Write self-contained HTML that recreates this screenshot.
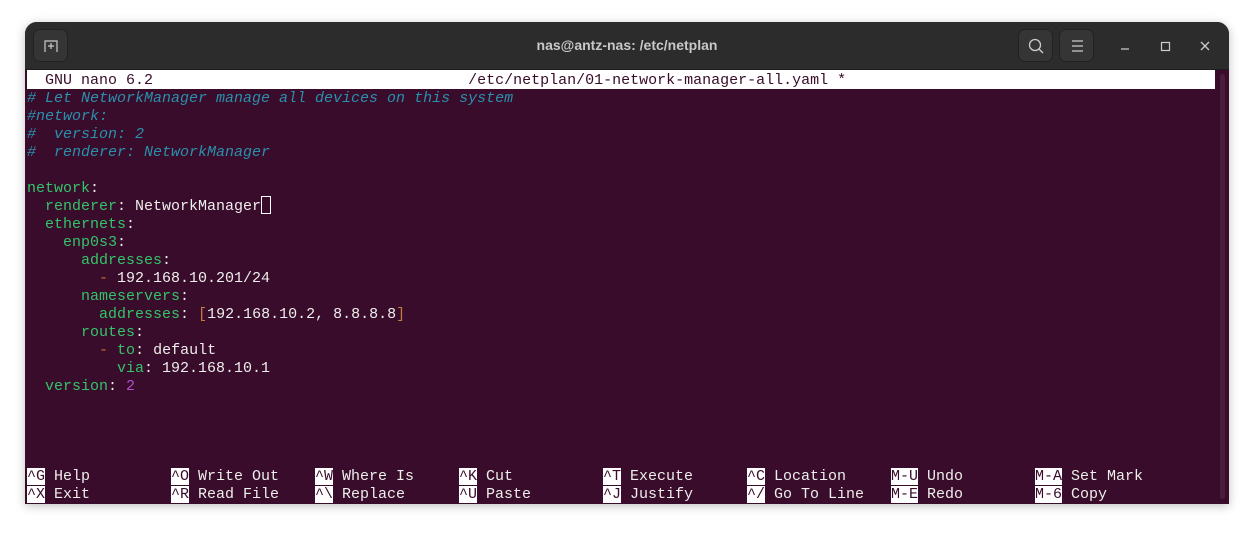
<!DOCTYPE html>
<html><head><style>
*{margin:0;padding:0;box-sizing:border-box}
body{width:1254px;height:533px;background:#fff;position:relative;overflow:hidden;font-family:"Liberation Mono",monospace}
.win{position:absolute;left:25px;top:22px;width:1204px;height:482px;background:#380c2a;border-radius:12px 12px 0 0;overflow:hidden;box-shadow:0 2px 10px rgba(0,0,0,.25)}
.tb{position:absolute;left:0;top:0;width:100%;height:48px;background:#2c2c2c;border-bottom:1px solid #1e1e1e}
.title{position:absolute;left:0;right:0;top:15px;text-align:center;color:#c8c8c8;font:bold 14px "Liberation Sans",sans-serif}
.btn{position:absolute;top:7px;width:35px;height:33px;background:#353535;border:1px solid #222;border-radius:7px}
.term{position:absolute;left:2px;top:48px;width:1188px;font-size:15px;line-height:18px;color:#eeeeec;white-space:pre}
.l{height:18px;padding-top:2px;line-height:18px}
.hd{background:#fff;color:#380c2a;height:19px}
.c{color:#2a90ac;font-style:italic}
.g{color:#33c46a}
.o{color:#c07a3c}
.p{color:#b04fc7}
.k{background:#fff;color:#380c2a}
.cur{display:inline-block;width:10px;height:18px;border:1px solid #fff;vertical-align:top;margin-top:-2px}
.sb{position:absolute;right:4px;top:52px;width:5px;height:425px;background:#4a1d3b;border-radius:3px}
.m{display:inline-block;width:144px}
</style></head><body>
<div class="win">
 <div class="tb">
  <div class="btn" style="left:8px"><svg width="35" height="33" viewBox="0 0 35 33"><path d="M11 22V11h12v11M17 13v6M14 16h6" fill="none" stroke="#ccc" stroke-width="1.2"/></svg></div>
  <div class="title">nas@antz-nas: /etc/netplan</div>
  <div class="btn" style="left:993px"><svg width="35" height="33" viewBox="0 0 35 33"><circle cx="16" cy="15" r="5.5" fill="none" stroke="#ccc" stroke-width="1.3"/><path d="M20 19l4 4" stroke="#ccc" stroke-width="1.4"/></svg></div>
  <div class="btn" style="left:1034px"><svg width="35" height="33" viewBox="0 0 35 33"><path d="M12 11h11M12 16h11M12 21h11" stroke="#ccc" stroke-width="1.2"/></svg></div>
  <svg style="position:absolute;left:1092px;top:16px" width="110" height="18"><path d="M4 11h8" stroke="#ccc" stroke-width="1.3"/><rect x="44.5" y="4.5" width="8" height="8" fill="none" stroke="#ccc" stroke-width="1.2"/><path d="M84 4l8 8M92 4l-8 8" stroke="#ccc" stroke-width="1.3"/></svg>
 </div>
 <div class="sb"></div>
 <div class="term"><div class="l hd">  GNU nano 6.2                                   /etc/netplan/01-network-manager-all.yaml *                                                  </div><div class="l c" style="height:17px;padding-top:1px"># Let NetworkManager manage all devices on this system</div><div class="l c">#network:</div><div class="l c">#  version: 2</div><div class="l c">#  renderer: NetworkManager</div><div class="l"> </div><div class="l"><span class="g">network</span>:</div><div class="l">  <span class="g">renderer</span>: NetworkManager<span class="cur"></span></div><div class="l">  <span class="g">ethernets</span>:</div><div class="l">    <span class="g">enp0s3</span>:</div><div class="l">      <span class="g">addresses</span>:</div><div class="l">        <span class="o">-</span> 192.168.10.201/24</div><div class="l">      <span class="g">nameservers</span>:</div><div class="l">        <span class="g">addresses</span>: <span class="o">[</span>192.168.10.2, 8.8.8.8<span class="o">]</span></div><div class="l">      <span class="g">routes</span>:</div><div class="l">        <span class="o">-</span> <span class="g">to</span>: default</div><div class="l">          <span class="g">via</span>: 192.168.10.1</div><div class="l">  <span class="g">version</span>: <span class="p">2</span></div><div class="l"> </div><div class="l"> </div><div class="l"> </div><div class="l"> </div><div class="l"><span class="m"><span class="k">^G</span> Help</span><span class="m"><span class="k">^O</span> Write Out</span><span class="m"><span class="k">^W</span> Where Is</span><span class="m"><span class="k">^K</span> Cut</span><span class="m"><span class="k">^T</span> Execute</span><span class="m"><span class="k">^C</span> Location</span><span class="m"><span class="k">M-U</span> Undo</span><span class="m"><span class="k">M-A</span> Set Mark</span></div><div class="l"><span class="m"><span class="k">^X</span> Exit</span><span class="m"><span class="k">^R</span> Read File</span><span class="m"><span class="k">^\</span> Replace</span><span class="m"><span class="k">^U</span> Paste</span><span class="m"><span class="k">^J</span> Justify</span><span class="m"><span class="k">^/</span> Go To Line</span><span class="m"><span class="k">M-E</span> Redo</span><span class="m"><span class="k">M-6</span> Copy</span></div></div>
</div>
</body></html>
